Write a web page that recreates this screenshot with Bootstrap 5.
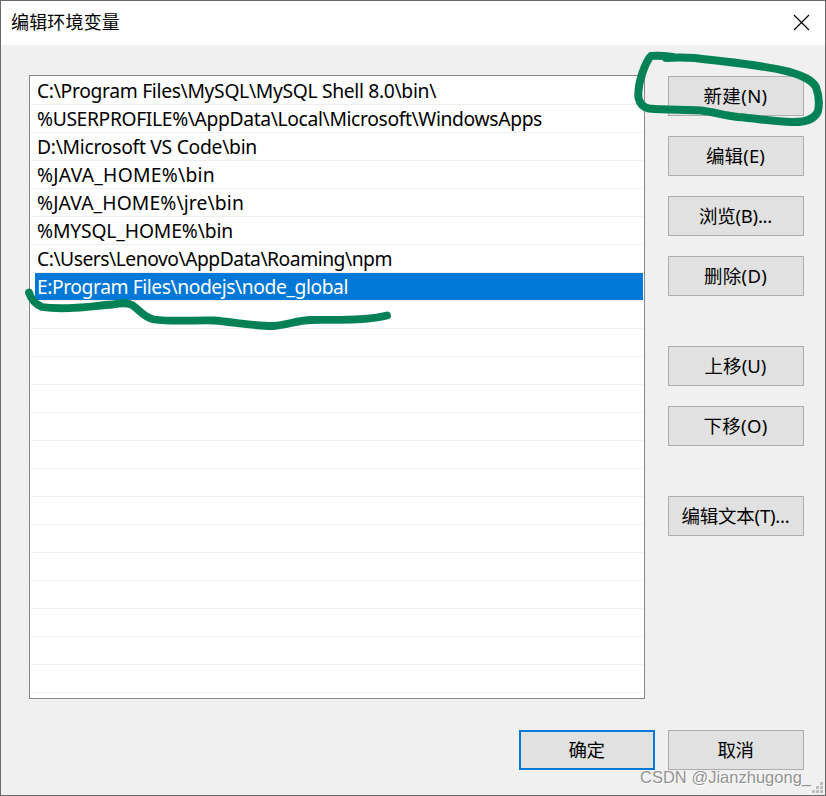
<!DOCTYPE html>
<html lang="zh-CN">
<head>
<meta charset="utf-8">
<title>编辑环境变量</title>
<link href="https://cdn.jsdelivr.net/npm/bootstrap@5.3.0/dist/css/bootstrap.min.css" rel="stylesheet">
<style>
body{font-family:"Noto Sans","Noto Sans CJK SC",sans-serif;font-size:18px;color:#000;background:#f0f0f0;overflow:hidden}
.dialog-window{width:826px;height:796px;border:1px solid #696969;background:#f0f0f0}
.title-bar{height:44px;padding:0 15px 2px 10px;line-height:42px}
.dialog-main{padding:30px 21px 0 28px}
.path-list{width:616px;height:624px;border:1px solid #828790;padding:1px;border-radius:0}
.path-row{height:28px;border:0;border-bottom:1px solid #efefef;border-radius:0;padding:0 0 0 4px;color:#000;font-size:19.3px;line-height:28px;background:#fff}
.path-row span{display:block;height:27px;padding-left:2px;white-space:pre}
.path-row.chosen span{background:#0078d7;color:#fff}
.dlg-btn{width:136px;height:40px;padding:0 1px 0 0;border:1px solid #adadad;border-radius:0;background:#e1e1e1;color:#000;font-size:18.5px;line-height:38px}
.dlg-btn.default-btn{border:2px solid #0078d7;line-height:36px}
.gap-above{margin-top:30px}
.side-col{padding-top:1px;gap:20px}
.dlg-footer{padding:31px 21px 0 0;gap:13px}
.pen{left:0;top:0;pointer-events:none}
.credit{left:640px;top:765px;font:16.5px/24px "Liberation Sans",sans-serif;color:#939393;text-shadow:1px 1px 0 #fff;white-space:nowrap}
.grip{left:811px;top:780px}
</style>
<script src="https://cdn.jsdelivr.net/npm/bootstrap@5.3.0/dist/js/bootstrap.bundle.min.js"></script>
</head>
<body>
<div class="dialog-window position-relative">
  <div class="title-bar bg-white d-flex align-items-center justify-content-between">
    <span data-w="109">编辑环境变量</span>
    <svg width="17" height="17" viewBox="0 0 17 17" stroke="#000" stroke-width="1.15"><path d="M1 1 16 16M16 1 1 16"/></svg>
  </div>
  <div class="dialog-main d-flex justify-content-between">
    <div class="path-list list-group bg-white overflow-hidden">
      <div class="path-row list-group-item"><span><b class="fw-normal" data-w="399">C:\Program Files\MySQL\MySQL Shell 8.0\bin\</b></span></div>
      <div class="path-row list-group-item"><span><b class="fw-normal" data-w="505">%USERPROFILE%\AppData\Local\Microsoft\WindowsApps</b></span></div>
      <div class="path-row list-group-item"><span><b class="fw-normal" data-w="220">D:\Microsoft VS Code\bin</b></span></div>
      <div class="path-row list-group-item"><span><b class="fw-normal" data-w="178">%JAVA_HOME%\bin</b></span></div>
      <div class="path-row list-group-item"><span><b class="fw-normal" data-w="207">%JAVA_HOME%\jre\bin</b></span></div>
      <div class="path-row list-group-item"><span><b class="fw-normal" data-w="196">%MYSQL_HOME%\bin</b></span></div>
      <div class="path-row list-group-item"><span><b class="fw-normal" data-w="355">C:\Users\Lenovo\AppData\Roaming\npm</b></span></div>
      <div class="path-row list-group-item chosen"><span><b class="fw-normal" data-w="311">E:Program Files\nodejs\node_global</b></span></div>
      <div class="path-row list-group-item"></div><div class="path-row list-group-item"></div>
      <div class="path-row list-group-item"></div><div class="path-row list-group-item"></div>
      <div class="path-row list-group-item"></div><div class="path-row list-group-item"></div>
      <div class="path-row list-group-item"></div><div class="path-row list-group-item"></div>
      <div class="path-row list-group-item"></div><div class="path-row list-group-item"></div>
      <div class="path-row list-group-item"></div><div class="path-row list-group-item"></div>
      <div class="path-row list-group-item"></div><div class="path-row list-group-item"></div>
    </div>
    <div class="side-col d-flex flex-column">
      <button class="btn dlg-btn"><span data-w="64">新建(N)</span></button>
      <button class="btn dlg-btn"><span data-w="59">编辑(E)</span></button>
      <button class="btn dlg-btn"><span data-w="73">浏览(B)...</span></button>
      <button class="btn dlg-btn"><span data-w="63">删除(D)</span></button>
      <button class="btn dlg-btn gap-above"><span data-w="62">上移(U)</span></button>
      <button class="btn dlg-btn"><span data-w="64">下移(O)</span></button>
      <button class="btn dlg-btn gap-above"><span data-w="108">编辑文本(T)...</span></button>
    </div>
  </div>
  <div class="dlg-footer d-flex justify-content-end">
    <button class="btn dlg-btn default-btn"><span data-w="36">确定</span></button>
    <button class="btn dlg-btn"><span data-w="36">取消</span></button>
  </div>
</div>
<svg class="grip position-absolute" width="13" height="13" fill="#bfbfbf"><path d="M9 2h3v3H9zM5 6h3v3H5zM9 6h3v3H9zM1 10h3v3H1zM5 10h3v3H5zM9 10h3v3H9z"/></svg>
<div class="credit position-absolute"><span data-w="171">CSDN @Jianzhugong_</span></div>
<svg class="pen position-absolute" width="826" height="796" fill="none" stroke="#048256" stroke-linecap="round" stroke-linejoin="round">
  <path stroke-width="8" d="M673 57C665 56 657 55.500 651 56C646 61 637 83 638.500 98C640 105 644 107.500 649 108.500C666 110 683 109.500 701 110.500C714 112 724 115.500 738 117C758 118.500 778 122.500 794 122C806 122 815 119 818 111C819.500 104 818.500 94 816 87C812 80 803 76 790 72C760 64.500 729 62.500 695 58C684 57.500 674 57.500 666 58"/>
  <path stroke-width="7.800" d="M29 292.500C31 299 36 305 42 307C66 310.500 91 306 113 304.500C120 303 127 302.500 132 305C140 310 143 317 154 319.500C172 322 194 320 214 320.500C233 322 252 326 273 326C288 325 296 320.500 311 320C333 319.500 362 321.500 387 315.500"/>
</svg>
<script>
// Spread each label's letter-spacing so that it fills its nominal width.
document.querySelectorAll('[data-w]').forEach(function (el) {
  var extra = el.dataset.w - el.getBoundingClientRect().width;
  el.style.letterSpacing = extra / el.textContent.length + 'px';
});
</script>
</body>
</html>
